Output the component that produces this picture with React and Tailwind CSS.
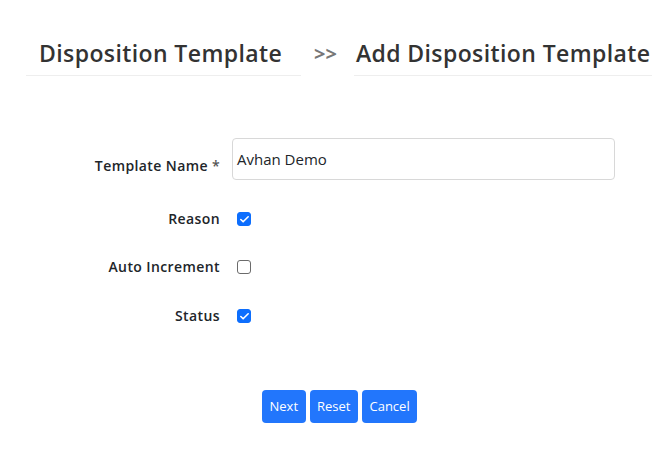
import { Check } from 'lucide-react';

const rows = [
    { label: 'Reason', checked: true },
    { label: 'Auto Increment', checked: false },
    { label: 'Status', checked: true }
];

const Box = ({ checked }) => (
    <span
        className={`flex h-[14px] w-[14px] items-center justify-center rounded-[3px] ${
            checked ? 'bg-[#0d6efd] border border-[#0d6efd]' : 'bg-white border border-[#6b6b6b]'
        }`}
    >
        {checked && <Check className="h-[11px] w-[11px] text-white" strokeWidth={3.5} />}
    </span>
);

const App = () => {
    return (
        <div className="h-[460px] w-[669px] bg-white font-['Open_Sans',sans-serif] text-[#212529]">
            {/* Breadcrumb heading */}
            <div className="flex items-start pt-[38px]">
                <div className="ml-[26px] w-[275px] border-b border-[#eeeeee] pb-[7px] pl-[13px]">
                    <h2 className="text-[23px] font-semibold leading-[30px] tracking-[0.4px] text-[#333333]">Disposition Template</h2>
                </div>
                <span className="ml-[13px] mt-[1px] text-[20px] font-bold leading-[30px] text-[#777777]">&gt;&gt;</span>
                <div className="ml-[17px] w-[298px] border-b border-[#eeeeee] pb-[7px] pl-[2px]">
                    <h2 className="text-[23px] font-semibold leading-[30px] tracking-[0.4px] text-[#333333]">Add Disposition Template</h2>
                </div>
            </div>

            {/* Form */}
            <div className="mt-[62px] flex flex-col">
                <div className="flex items-center">
                    <label className="w-[220px] pt-[12px] text-right text-[14px] font-semibold tracking-[0.4px] text-[#212529]">
                        Template Name <span className="text-[#555]">*</span>
                    </label>
                    <div className="ml-[12px] flex h-[42px] w-[383px] items-center rounded-[4px] border border-[#d8d8d8] px-[4px] text-[15px] text-[#212529]">
                        Avhan Demo
                    </div>
                </div>
                {rows.map((row, i) => (
                    <div key={row.label} className={`flex items-center ${i === 2 ? 'mt-[31px]' : 'mt-[30px]'}`}>
                        <label className="w-[220px] text-right text-[14px] font-semibold leading-[18px] tracking-[0.4px] text-[#212529]">{row.label}</label>
                        <div className="ml-[17px]">
                            <Box checked={row.checked} />
                        </div>
                    </div>
                ))}
            </div>

            {/* Actions */}
            <div className="mt-[65px] flex justify-start gap-[4px] pl-[262px]">
                {['Next', 'Reset', 'Cancel'].map((b) => (
                    <button
                        key={b}
                        className="h-[33px] rounded-[4px] bg-[#2276fc] px-[7.5px] text-[13px] text-white"
                    >
                        {b}
                    </button>
                ))}
            </div>
        </div>
    );
};

export default App;
